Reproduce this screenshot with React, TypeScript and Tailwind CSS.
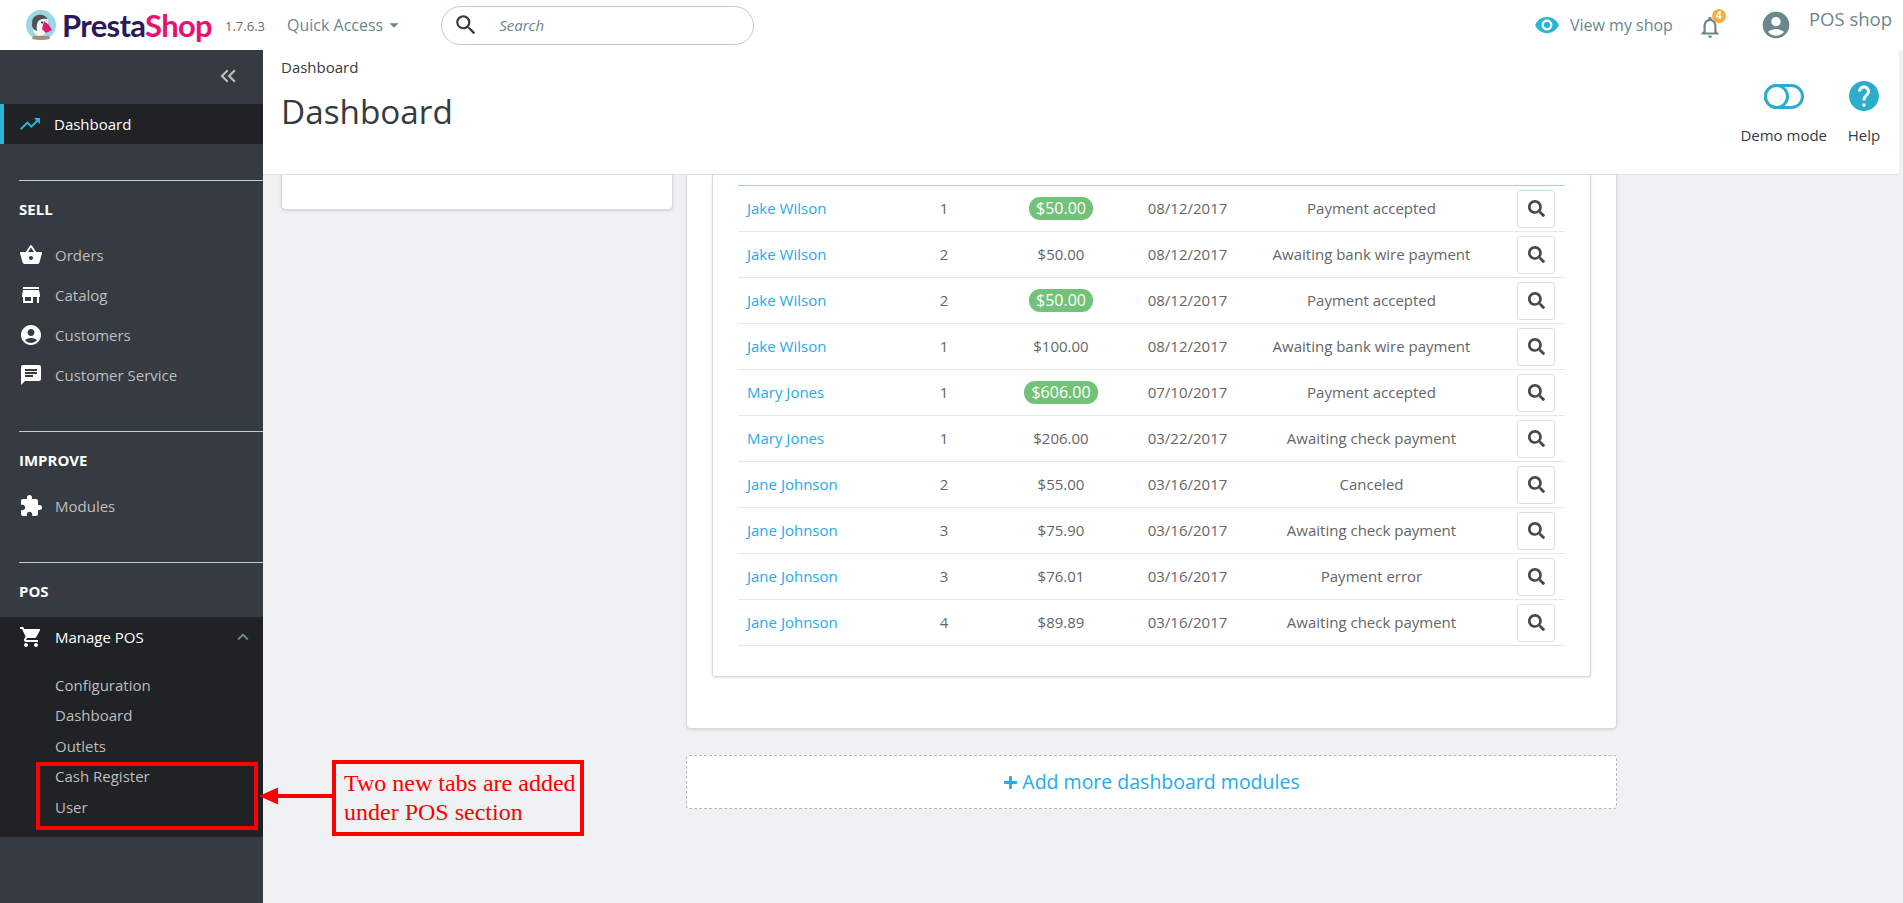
import { FaPlus, FaSearch } from "react-icons/fa";
import {
  MdAccountCircle,
  MdArrowDropDown,
  MdChat,
  MdExpandLess,
  MdExtension,
  MdHelp,
  MdKeyboardDoubleArrowLeft,
  MdNotificationsNone,
  MdOutlineSearch,
  MdShoppingBasket,
  MdShoppingCart,
  MdStore,
  MdTrendingUp,
  MdVisibility,
} from "react-icons/md";

const orders = [
  { name: "Jake Wilson", qty: 1, total: "$50.00", paid: true, date: "08/12/2017", status: "Payment accepted" },
  { name: "Jake Wilson", qty: 2, total: "$50.00", paid: false, date: "08/12/2017", status: "Awaiting bank wire payment" },
  { name: "Jake Wilson", qty: 2, total: "$50.00", paid: true, date: "08/12/2017", status: "Payment accepted" },
  { name: "Jake Wilson", qty: 1, total: "$100.00", paid: false, date: "08/12/2017", status: "Awaiting bank wire payment" },
  { name: "Mary Jones", qty: 1, total: "$606.00", paid: true, date: "07/10/2017", status: "Payment accepted" },
  { name: "Mary Jones", qty: 1, total: "$206.00", paid: false, date: "03/22/2017", status: "Awaiting check payment" },
  { name: "Jane Johnson", qty: 2, total: "$55.00", paid: false, date: "03/16/2017", status: "Canceled" },
  { name: "Jane Johnson", qty: 3, total: "$75.90", paid: false, date: "03/16/2017", status: "Awaiting check payment" },
  { name: "Jane Johnson", qty: 3, total: "$76.01", paid: false, date: "03/16/2017", status: "Payment error" },
  { name: "Jane Johnson", qty: 4, total: "$89.89", paid: false, date: "03/16/2017", status: "Awaiting check payment" },
];

function Logo() {
  return (
    <svg viewBox="0 0 30 30" className="w-[30px] h-[30px] shrink-0">
      <circle cx="15" cy="15" r="15" fill="#9ad6e6" />
      <path d="M6 29 Q15 31 24 29 L23 26 L7 26 Z" fill="#a58f78" />
      <path d="M6 15 Q6 5 14 4.5 Q21 5 22 11 L22 17 Q21 25 14 26 Q7 25 7 19 Z" fill="#f6f6f4" />
      <path d="M6 16 Q5 5 14 4.5 Q20 5 21.5 9 Q15 8 12 11.5 Q10 15 11 21 Q7 20 6 16 Z" fill="#4f5154" />
      <circle cx="16" cy="12.5" r="1" fill="#222" />
      <path d="M18 11 L23 15 L26 20 L20 23 L16 19 Z" fill="#df1a74" />
    </svg>
  );
}

function MenuItem({ icon, label }: { icon: React.ReactNode; label: string }) {
  return (
    <div className="flex items-center h-10 pl-[19px] text-[15px] text-[#bebebe]">
      <span className="w-9 text-white text-2xl flex items-center">{icon}</span>
      {label}
    </div>
  );
}

function SectionTitle({ label }: { label: string }) {
  return (
    <div className="ml-[19px] border-t border-[#bbcdd2] h-[55px] pt-[18px] text-[15px] leading-5 font-bold text-white">
      {label}
    </div>
  );
}

function Sidebar() {
  return (
    <aside className="w-[263px] shrink-0 bg-[#363a41] flex flex-col">
      <div className="h-[54px] flex items-center justify-end pr-[22px] pb-[2px] text-[#bebebe] text-[26px]">
        <MdKeyboardDoubleArrowLeft />
      </div>
      <div className="h-10 bg-[#202226] border-l-4 border-[#25b9d7] flex items-center pl-[14px] text-[15px] text-white">
        <MdTrendingUp className="text-[24px] text-[#25b9d7] mr-[12px]" />
        Dashboard
      </div>
      <div className="h-9" />
      <SectionTitle label="SELL" />
      <MenuItem icon={<MdShoppingBasket />} label="Orders" />
      <MenuItem icon={<MdStore />} label="Catalog" />
      <MenuItem icon={<MdAccountCircle />} label="Customers" />
      <MenuItem icon={<MdChat />} label="Customer Service" />
      <div className="h-9" />
      <SectionTitle label="IMPROVE" />
      <MenuItem icon={<MdExtension />} label="Modules" />
      <div className="h-9" />
      <SectionTitle label="POS" />
      <div className="bg-[#202226] h-[220px] relative">
        <div className="flex items-center h-10 pl-[19px] pr-[9px] text-[15px] text-white">
          <span className="w-9 text-2xl flex items-center">
            <MdShoppingCart />
          </span>
          <span className="flex-1">Manage POS</span>
          <MdExpandLess className="text-[22px] text-[#6c868e]" />
        </div>
        <div className="pt-[13px] pl-[55px] text-[15px] text-[#bebebe]">
          <div className="h-[30.4px] leading-[30px]">Configuration</div>
          <div className="h-[30.4px] leading-[30px]">Dashboard</div>
          <div className="h-[30.4px] leading-[30px]">Outlets</div>
          <div className="h-[30.4px] leading-[30px]">Cash Register</div>
          <div className="h-[30.4px] leading-[30px]">User</div>
        </div>
        {/* annotation box round the two new tabs */}
        <div className="absolute left-[36px] top-[145px] w-[222px] h-[68px] border-4 border-[#ff0000]" />
      </div>
    </aside>
  );
}

function TopBar() {
  return (
    <header className="h-[50px] shrink-0 bg-white flex items-center relative">
      <div className="ml-[26px]">
        <Logo />
      </div>
      <span className="ml-[6px] w-[163px] text-[31px] font-bold tracking-[-0.7px] leading-none [font-family:Lato,sans-serif] text-[#2b1a5a]">
        Presta<span className="text-[#e7126f]">Shop</span>
      </span>
      <span className="text-[13px] text-[#6c6c6c] mt-1">1.7.6.3</span>
      <div className="ml-[22px] flex items-center text-base text-[#6c868e]">
        Quick Access
        <MdArrowDropDown className="text-[22px]" />
      </div>
      <div className="ml-[36px] w-[313px] h-[39px] rounded-full border border-[#bbcdd2] flex items-center pl-[11px]">
        <MdOutlineSearch className="text-[26px] text-[#363a41]" />
        <span className="ml-[20px] text-[15px] italic text-[#6c868e]">Search</span>
      </div>
      <div className="ml-auto flex items-center text-[#6c868e]">
        <MdVisibility className="text-[26px] text-[#25b9d7]" />
        <span className="ml-[10px] text-base">View my shop</span>
        <span className="ml-[24px] relative text-[26px] flex">
          <MdNotificationsNone className="mt-[3px]" />
          <span className="absolute left-[15px] -top-[2px] w-[14px] h-[14px] rounded-full bg-[#f3ae3d] text-white text-[10px] font-bold flex items-center justify-center">
            4
          </span>
        </span>
        <MdAccountCircle className="ml-[37px] text-[32px]" />
        <span className="ml-[17px] mr-[11px] -mt-3 text-[18.5px]">POS shop</span>
      </div>
    </header>
  );
}

function PageHeader() {
  return (
    <div className="h-[125px] shrink-0 bg-white border-b border-[#dfe1e2] mr-1 flex justify-between pl-[18px] text-[#363a41]">
      <div>
        <div className="mt-[7px] text-[15px] leading-5">Dashboard</div>
        <h1 className="mt-[12px] text-[33.3px] leading-[44px]">Dashboard</h1>
      </div>
      <div className="flex gap-[19px] pr-[17px] pt-[34px] text-[15px]">
        <div className="flex flex-col items-center">
          <div className="w-10 h-[25px] rounded-full border-[3px] border-[#2eacce] relative">
            <div className="absolute -left-[3px] -top-[3px] w-[25px] h-[25px] rounded-full border-[3px] border-[#2eacce] bg-white" />
          </div>
          <div className="mt-[16px] leading-5">Demo mode</div>
        </div>
        <div className="flex flex-col items-center">
          <MdHelp className="text-[36px] text-[#2eacce] -mt-[6px]" />
          <div className="mt-[11px] leading-5">Help</div>
        </div>
      </div>
    </div>
  );
}

function OrderRow({ order }: { order: (typeof orders)[number] }) {
  return (
    <div className="grid grid-cols-[163px_86px_148px_105px_263px_61px] h-[46px] items-center border-b border-[#e5e7e8] text-[15px] text-[#666]">
      <a className="pl-[9px] text-[#25aaef]">{order.name}</a>
      <div className="text-center">{order.qty}</div>
      <div className="text-center">
        {order.paid ? (
          <span className="inline-block h-[23px] leading-[23px] px-[7px] rounded-[11px] bg-[#72c279] text-white text-base font-medium">
            {order.total}
          </span>
        ) : (
          order.total
        )}
      </div>
      <div className="text-center">{order.date}</div>
      <div className="text-center">{order.status}</div>
      <div className="pl-[14px]">
        <button className="w-[38px] h-[38px] rounded-[3px] border border-[#dbe0e2] bg-white flex items-center justify-center text-[#4a4a4a]">
          <FaSearch className="text-[17px]" />
        </button>
      </div>
    </div>
  );
}

function Content() {
  return (
    <div className="flex-1 min-h-0 flex items-start gap-[13px] pl-[18px]">
      <div className="w-[392px] h-[35px] bg-white rounded-b-[5px] border border-t-0 border-[#d9dcde] shadow-sm" />
      <div className="w-[931px]">
        <div className="h-[554px] bg-white rounded-b-[5px] border border-t-0 border-[#d9dcde] shadow-sm px-[25px]">
          <div className="h-[502px] rounded-b-[3px] border border-t-0 border-[#d9dcde] shadow-sm px-[25px] pt-[10px]">
            <div className="border-t border-[#9fd0e8]">
              {orders.map((order, i) => (
                <OrderRow key={i} order={order} />
              ))}
            </div>
          </div>
        </div>
        <div className="mt-[26px] h-[54px] bg-white border border-dashed border-[#b5b8ba] rounded-[3px] flex items-center justify-center text-[19.5px] text-[#25aaef]">
          <FaPlus className="text-[15px] mr-[4px]" />
          Add more dashboard modules
        </div>
      </div>
      {/* callout pointing at the new tabs */}
      <div className="absolute left-[259px] top-[760px] flex items-center">
        <svg width="73" height="20" viewBox="0 0 73 20" className="shrink-0 -mt-[4px]">
          <path d="M0 10 L19 1.5 V8 H73 V12 H19 V18.5 Z" fill="#ff0000" />
        </svg>
        <div className="w-[252px] h-[76px] border-4 border-[#ff0000] px-2 pt-[5px] text-2xl leading-[29px] text-[#ff0000] whitespace-nowrap [font-family:'Liberation_Serif',serif]">
          Two new tabs are added
          <br />
          under POS section
        </div>
      </div>
    </div>
  );
}

export default function App() {
  return (
    <div className="relative h-[903px] overflow-hidden bg-[#eff1f2] flex flex-col [font-family:'Open_Sans',sans-serif]">
      <TopBar />
      <div className="flex flex-1 min-h-0">
        <Sidebar />
        <main className="flex-1 min-w-0 flex flex-col">
          <PageHeader />
          <Content />
        </main>
      </div>
    </div>
  );
}
